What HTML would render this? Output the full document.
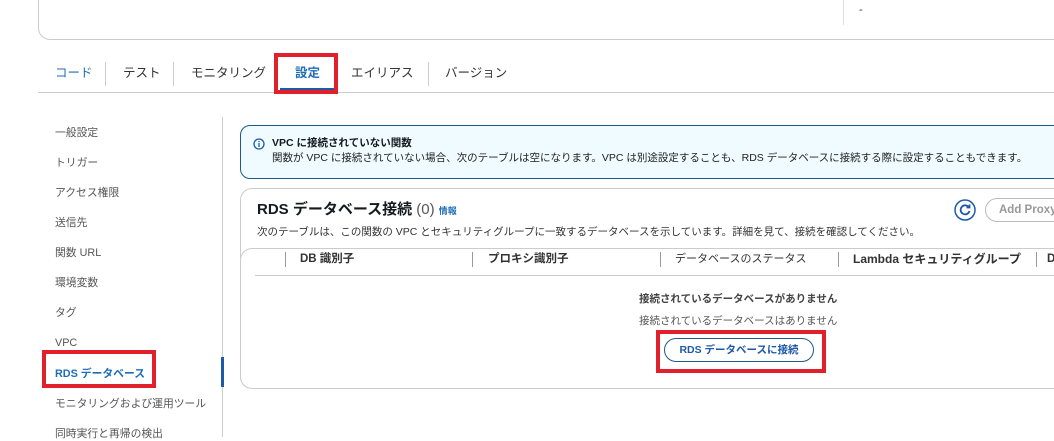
<!DOCTYPE html>
<html><head><meta charset="utf-8"><style>
*{margin:0;padding:0;box-sizing:border-box}
body{width:1054px;height:430px;overflow:hidden;background:#fff;position:relative;font-family:"Liberation Sans","Noto Sans CJK JP",sans-serif;color:#16191f}
.a{position:absolute;white-space:nowrap}
.tab{position:absolute;top:65px;font-size:12.5px;color:#333;line-height:16px}
.sep{position:absolute;width:1px;background:#ccc}
.nav{position:absolute;left:55px;font-size:10.8px;color:#555;line-height:14px}
.red{position:absolute;border:4px solid #e0202a}
.th{position:absolute;top:252px;font-size:11.5px;font-weight:bold;color:#333;line-height:14px}
</style></head><body>
<div class="a" style="left:38px;top:-20px;width:1100px;height:60px;border:1px solid #ccc;border-radius:12px"></div>
<div class="sep" style="left:843px;top:0;height:25px;background:#ddd"></div>
<div class="a" style="left:859px;top:4px;font-size:11px;color:#333">-</div>

<div class="tab" style="left:55px;color:#1e6db8">コード</div>
<div class="sep" style="left:105px;top:62px;height:24px"></div>
<div class="tab" style="left:123px">テスト</div>
<div class="sep" style="left:173px;top:62px;height:24px"></div>
<div class="tab" style="left:191px">モニタリング</div>
<div class="tab" style="left:295px;color:#1e6db8;font-weight:bold">設定</div>
<div class="a" style="left:280px;top:88px;width:54px;height:3px;background:#1e5aa8"></div>
<div class="tab" style="left:351px">エイリアス</div>
<div class="sep" style="left:428px;top:62px;height:24px"></div>
<div class="tab" style="left:445px">バージョン</div>
<div class="a" style="left:38px;top:92px;width:1020px;height:1px;background:#ccc"></div>
<div class="red" style="left:274px;top:53px;width:64px;height:41px"></div>

<div class="nav" style="top:126px">一般設定</div>
<div class="nav" style="top:156px">トリガー</div>
<div class="nav" style="top:186px">アクセス権限</div>
<div class="nav" style="top:216px">送信先</div>
<div class="nav" style="top:246px">関数 URL</div>
<div class="nav" style="top:276px">環境変数</div>
<div class="nav" style="top:306px">タグ</div>
<div class="nav" style="top:336px">VPC</div>
<div class="nav" style="top:367px;color:#1e6db8;font-weight:bold">RDS データベース</div>
<div class="nav" style="top:397px">モニタリングおよび運用ツール</div>
<div class="nav" style="top:427px">同時実行と再帰の検出</div>
<div class="red" style="left:42px;top:350px;width:114px;height:38px"></div>
<div class="sep" style="left:222px;top:117px;height:320px;background:#ccc"></div>
<div class="a" style="left:221px;top:357px;width:3px;height:30px;background:#1e5aa8"></div>

<div class="a" style="left:240px;top:125px;width:830px;height:54px;background:#f0fbff;border:1px solid #1e5a8a;border-radius:10px"></div>
<svg class="a" style="left:253px;top:138px" width="12" height="12" viewBox="0 0 12 12"><circle cx="6" cy="6" r="5" fill="none" stroke="#1e5aa8" stroke-width="1.3"/><rect x="5.35" y="5" width="1.3" height="4" fill="#1e5aa8"/><rect x="5.35" y="3" width="1.3" height="1.2" fill="#1e5aa8"/></svg>
<div class="a" style="left:272px;top:136px;font-size:10.5px;font-weight:bold;line-height:14px">VPC に接続されていない関数</div>
<div class="a" style="left:272px;top:151px;font-size:10.5px;color:#222;line-height:14px">関数が VPC に接続されていない場合、次のテーブルは空になります。VPC は別途設定することも、RDS データベースに接続する際に設定することもできます。</div>

<div class="a" style="left:240px;top:188px;width:830px;height:201px;border:1px solid #ccc;border-radius:12px"></div>
<div class="a" style="left:257px;top:201px;font-size:15px;font-weight:bold;line-height:18px">RDS データベース接続 <span style="font-weight:normal;color:#555">(0)</span> <span style="font-size:9px;color:#1e6db8">情報</span></div>
<svg class="a" style="left:954px;top:199px" width="22" height="22" viewBox="0 0 22 22"><circle cx="11" cy="11" r="10" fill="none" stroke="#1e5aa8" stroke-width="1.5"/><path d="M15 8.5A4.5 4.5 0 1 0 15.5 12" fill="none" stroke="#1e5aa8" stroke-width="1.8"/><path d="M12.5 8.5H15.5V5.5" fill="none" stroke="#1e5aa8" stroke-width="1.8"/></svg>
<div class="a" style="left:985px;top:198px;width:90px;height:24px;border:1px solid #bbb;border-radius:12px;font-size:11.5px;font-weight:bold;color:#999;padding:5px 0 0 13px">Add Proxy</div>
<div class="a" style="left:257px;top:225px;font-size:10.5px;color:#333;line-height:14px">次のテーブルは、この関数の VPC とセキュリティグループに一致するデータベースを示しています。詳細を見て、接続を確認してください。</div>
<div class="a" style="left:240px;top:248px;width:830px;height:141px;border:1px solid #ccc;border-radius:12px;border-bottom:none"></div>
<div class="a" style="left:255px;top:275px;width:800px;height:1px;background:#ccc"></div>
<div class="sep" style="left:285px;top:252px;height:15px;background:#999"></div>
<div class="th" style="left:300px">DB 識別子</div>
<div class="sep" style="left:472px;top:252px;height:15px;background:#999"></div>
<div class="th" style="left:488px">プロキシ識別子</div>
<div class="sep" style="left:660px;top:252px;height:15px;background:#999"></div>
<div class="th" style="left:675px;font-weight:normal;font-size:11px">データベースのステータス</div>
<div class="sep" style="left:838px;top:252px;height:15px;background:#999"></div>
<div class="th" style="left:853px;font-size:12px">Lambda セキュリティグループ</div>
<div class="sep" style="left:1036px;top:252px;height:15px;background:#999"></div>
<div class="th" style="left:1047px">D</div>

<div class="a" style="left:639px;top:292px;font-size:10.5px;font-weight:bold;color:#444;line-height:14px">接続されているデータベースがありません</div>
<div class="a" style="left:639px;top:314px;font-size:10.5px;color:#555;line-height:14px">接続されているデータベースはありません</div>
<div class="a" style="left:664px;top:338px;width:150px;height:24px;border:1px solid #1e5a8a;border-radius:12px;font-size:10.5px;font-weight:bold;color:#1e5aa8;text-align:center;line-height:22px">RDS データベースに接続</div>
<div class="red" style="left:656px;top:330px;width:170px;height:43px"></div>
</body></html>
